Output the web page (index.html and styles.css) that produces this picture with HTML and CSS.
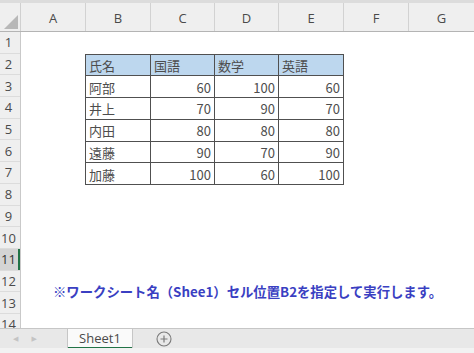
FILE: index.html
```html
<!DOCTYPE html>
<html lang="ja">
<head>
<meta charset="utf-8">
<title>Sheet1</title>
<link rel="stylesheet" href="styles.css">
</head>
<body>
<div class="app">
  <div class="topstrip"></div>
  <div class="colheads">
    <div class="corner"><svg width="21" height="29" viewBox="0 0 21 29"><polygon points="18,12 18,26 4,26" fill="#b8b8b8"/></svg></div>
    <div class="ch w65">A</div>
    <div class="ch w65">B</div>
    <div class="ch w64">C</div>
    <div class="ch w64">D</div>
    <div class="ch w65">E</div>
    <div class="ch w65">F</div>
    <div class="ch w65 last">G</div>
  </div>
  <div class="body">
    <div class="rowheads">
      <div class="rh">1</div>
      <div class="rh">2</div>
      <div class="rh">3</div>
      <div class="rh">4</div>
      <div class="rh">5</div>
      <div class="rh">6</div>
      <div class="rh">7</div>
      <div class="rh">8</div>
      <div class="rh">9</div>
      <div class="rh">10</div>
      <div class="rh sel">11</div>
      <div class="rh">12</div>
      <div class="rh">13</div>
      <div class="rh">14</div>
    </div>
    <div class="sheet">
      <div class="data">
        <div class="c hd">氏名</div><div class="c hd">国語</div><div class="c hd">数学</div><div class="c hd">英語</div>
        <div class="c">阿部</div><div class="c n">60</div><div class="c n">100</div><div class="c n">60</div>
        <div class="c">井上</div><div class="c n">70</div><div class="c n">90</div><div class="c n">70</div>
        <div class="c">内田</div><div class="c n">80</div><div class="c n">80</div><div class="c n">80</div>
        <div class="c">遠藤</div><div class="c n">90</div><div class="c n">70</div><div class="c n">90</div>
        <div class="c">加藤</div><div class="c n">100</div><div class="c n">60</div><div class="c n">100</div>
      </div>
      <p class="note">※ワークシート名（Shee1）セル位置B2を指定して実行します。</p>
    </div>
  </div>
  <div class="tabbar">
    <div class="nav"><span class="arrow">&#9664;</span><span class="arrow">&#9654;</span></div>
    <div class="tab">Sheet1</div>
    <div class="add"><svg width="16" height="16" viewBox="0 0 16 16"><circle cx="8" cy="8" r="7" fill="none" stroke="#7a7a7a" stroke-width="1.1"/><path d="M8 4.5v7M4.5 8h7" stroke="#7a7a7a" stroke-width="1.2"/></svg></div>
  </div>
</div>
</body>
</html>
```

FILE: styles.css
```css
* { box-sizing: border-box; }
html, body { margin: 0; padding: 0; }
body { background: #fff; width: 474px; height: 353px; overflow: hidden; }
.app { width: 474px; height: 353px; display: flex; flex-direction: column; overflow: hidden; font-family: "Noto Sans CJK JP", "Noto Sans", sans-serif; }

.topstrip { height: 3px; background: #dcdcdc; flex: none; }

.colheads { height: 29px; display: flex; flex: none; background: #efefef; border-bottom: 1px solid #b4b4b4; }
.corner { width: 21px; flex: none; border-right: 1px solid #d0d0d0; }
.corner svg { display: block; }
.ch { flex: none; display: flex; align-items: center; justify-content: center; border-right: 1px solid #d2d2d2; color: #4a4a4a; font-family: "Open Sans", "Noto Sans", sans-serif; font-size: 13px; padding-top: 2px; }
.ch.last { border-right: none; }
.w65 { width: 65px; }
.w64 { width: 64px; }

.body { height: 296px; display: flex; flex: none; overflow: hidden; }
.rowheads { width: 21px; flex: none; background: #efefef; border-right: 1px solid #c9c9c9; }
.rh { height: 21.7px; border-bottom: 1px solid #dcdcdc; display: flex; align-items: center; justify-content: center; padding-right: 3px; color: #4a4a4a; font-family: "Open Sans", "Noto Sans", sans-serif; font-size: 13px; }
.rh.sel { background: #d4d4d4; box-shadow: inset -2px 0 0 #217346; color: #333; }

.sheet { flex: 1; padding-top: 21.5px; }
.data { margin-left: 64px; display: grid; grid-template-columns: 65px 64px 64px 65px; grid-auto-rows: 21.8px; border-top: 1px solid #505050; border-left: 1px solid #505050; width: 259px; }
.c { border-right: 1px solid #505050; border-bottom: 1px solid #505050; display: flex; align-items: center; padding: 1px 3px 0 3px; font-size: 13px; color: #4d4d4d; line-height: 1; }
.c.hd { background: #bdd7ee; }
.c.n { justify-content: flex-end; }

.note { margin: 97px 0 0 32px; font-size: 13.35px; line-height: 20px; font-weight: 700; color: #3a3fc2; white-space: nowrap; }

.tabbar { flex: 1; display: flex; align-items: flex-start; background: #e8e8e8; border-top: 1px solid #c6c6c6; position: relative; }
.nav { width: 68px; height: 20px; display: flex; align-items: center; padding-left: 13px; gap: 13px; }
.arrow { color: #c4c4c4; font-size: 7px; font-family: "DejaVu Sans", sans-serif; }
.tab { width: 64px; height: 20px; background: #fafafa; border-bottom: 2px solid #217346; display: flex; align-items: center; justify-content: center; font-family: "Open Sans", "Noto Sans", sans-serif; font-size: 13px; color: #4a4a4a; box-shadow: 1px 0 0 #c6c6c6, -1px 0 0 #c6c6c6; }
.add { margin-left: 24px; height: 20px; display: flex; align-items: center; }
.add svg { display: block; }
.tabbar::after { content: ""; position: absolute; left: 0; right: 0; bottom: 0; height: 5px; background: #f2f2f2; }
```
